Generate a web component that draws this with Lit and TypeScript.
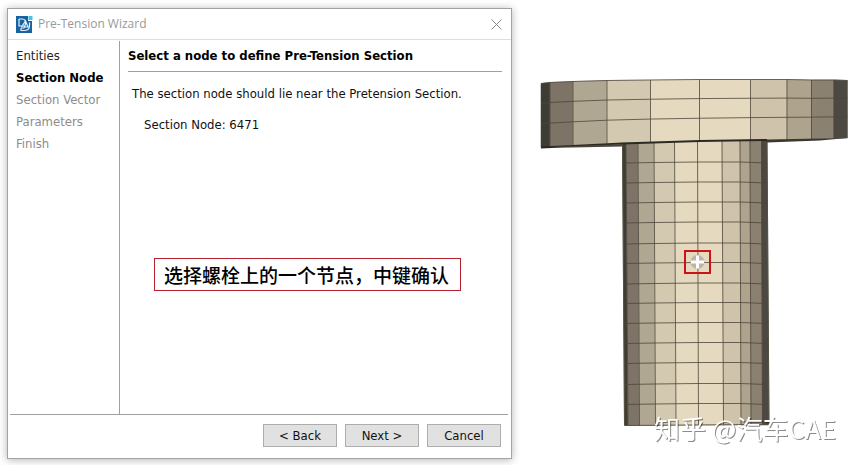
import { LitElement, html, css, svg } from "lit";
import { customElement, property, state } from "lit/decorators.js";

const HEAD_X = [541, 550, 573, 607, 650.5, 699.5, 750.5, 787, 811.5, 834, 847.5];
const HEAD_TOP = [83.5, 82.5, 81.5, 80.5, 80, 79.5, 79.5, 79.5, 80, 80, 80.5];
const HEAD_BOTTOM = [147.5, 147, 145.5, 143.5, 142, 141, 140, 139.5, 139, 138.5, 138];
const SHADES = ["#3e3d35", "#7d7467", "#b0a793", "#d3c9b1", "#e5dabf", "#e5dabf", "#cfc4ab", "#aea48e", "#8a8170", "#4c4942"];
const SHAFT_TOP = [622.5, 626, 638, 654, 674.5, 697.5, 722, 740, 750, 761.5, 767];
const SHAFT_BOTTOM = [624.5, 628, 639.5, 655.5, 676, 698.5, 723.5, 741, 751, 762.5, 769];
const SHAFT_ROWS = [162, 182, 202, 222, 243, 262.5, 283, 302.5, 322.5, 342.5, 362.5, 383.5, 403.5];

@customElement("bolt-model")
export class BoltModel extends LitElement {
  static styles = css`
    :host { display: block; }
    .view { display: block; width: 100%; height: auto; }
    .edge { fill: none; stroke: #4d463a; stroke-width: 1; stroke-opacity: 0.8; }
    .rim { fill: none; stroke: #2b2922; stroke-width: 2; }
    .outline { fill: none; stroke: #55503f; stroke-width: 1; }
    .pick { fill: none; stroke: #cb1318; stroke-width: 2; }
    .node { fill: #bdb5a6; }
    .cross { stroke: #fff; stroke-width: 3; }
    .mark {
      fill: #fff;
      font: 26px "Noto Sans CJK SC", sans-serif;
      filter: drop-shadow(1px 1px 0 rgba(0, 0, 0, 0.45));
    }
  `;

  private quad(xa: number, ya: number, xb: number, yb: number, xc: number, yc: number, xd: number, yd: number, fill: string) {
    return svg`<polygon points="${xa},${ya} ${xb},${yb} ${xc},${yc} ${xd},${yd}" fill=${fill} stroke=${fill} stroke-width="0.5"></polygon>`;
  }

  private headRow(t: number) {
    return HEAD_X.map((x, i) => `${x},${HEAD_TOP[i] + (HEAD_BOTTOM[i] - HEAD_TOP[i]) * t}`).join(" ");
  }

  render() {
    return html`
      <svg class="view" viewBox="512 0 347 465" role="img" aria-label="Bolt mesh with the picked node">
        ${SHADES.map((c, i) => this.quad(SHAFT_TOP[i], 140, SHAFT_TOP[i + 1], 140, SHAFT_BOTTOM[i + 1], 425, SHAFT_BOTTOM[i], 425, c))}
        ${SHAFT_TOP.slice(1, -1).map((x, i) => svg`<line class="edge" x1=${x} y1="140" x2=${SHAFT_BOTTOM[i + 1]} y2="425"></line>`)}
        ${SHAFT_ROWS.map((y) => svg`<polyline class="edge" points="625,${y + 1} 654,${y + 0.5} 698,${y} 740,${y} 767,${y + 1}"></polyline>`)}
        <polyline class="outline" points="622.5,143 624.5,425.5 769,424.5 767,142"></polyline>
        ${SHADES.map((c, i) => this.quad(HEAD_X[i], HEAD_TOP[i], HEAD_X[i + 1], HEAD_TOP[i + 1], HEAD_X[i + 1], HEAD_BOTTOM[i + 1], HEAD_X[i], HEAD_BOTTOM[i], c))}
        ${HEAD_X.slice(1, -1).map((x, i) => svg`<line class="edge" x1=${x} y1=${HEAD_TOP[i + 1]} x2=${x} y2=${HEAD_BOTTOM[i + 1]}></line>`)}
        ${[0, 0.31, 0.63].map((t) => svg`<polyline class="edge" points=${this.headRow(t)}></polyline>`)}
        <polyline class="rim" points="541,147.5 573,146 622,143.5 700,141 767,140"></polyline>
        <polygon fill="#4a463c" points="550,147 622,144 622,146.500 573,147.500"></polygon>
        <polygon fill="#3a372f" points="767,139.5 847,138 820,140.5 767,142.5"></polygon>
        <circle class="node" cx="697.5" cy="262" r="7"></circle>
        <path class="cross" d="M691 262H704M697.5 255.5V268.5"></path>
        <rect class="pick" x="685" y="251" width="25" height="22"></rect>
        <text class="mark" x="654" y="439">知乎 @汽车CAE</text>
      </svg>
    `;
  }
}

@customElement("wizard-dialog")
export class WizardDialog extends LitElement {
  @property({ type: Number }) node = 6471;
  @state() private current = 1;
  private steps = ["Entities", "Section Node", "Section Vector", "Parameters", "Finish"];

  static styles = css`
    :host {
      display: flex;
      flex-direction: column;
      box-sizing: border-box;
      border: 1px solid #a3a3a3;
      background: #fff;
      color: #111;
      box-shadow: 0 1px 8px rgba(0, 0, 0, 0.3);
      font: 13px/22px "DejaVu Sans Condensed", "DejaVu Sans", sans-serif;
      font-stretch: condensed;
    }
    .title { display: flex; align-items: center; gap: 5px; height: 30px; padding: 0 7px 0 8px; border-bottom: 1px solid #dedede; }
    .logo { width: 17px; height: 17px; }
    .name { flex: 1; margin: 0; color: #999; font: 12px/20px "Open Sans", sans-serif; }
    .close { display: flex; padding: 2px; border: 0; background: none; }
    .cross { width: 11px; height: 11px; stroke: #8b8b8b; fill: none; }
    .body { flex: 1; display: flex; margin: 0 3px 0 2px; border-bottom: 1px solid #a0a0a0; }
    .steps { width: 110px; box-sizing: border-box; margin: 1px 0 0; padding: 4px 0 0 6px; list-style: none; border-right: 1px solid #a0a0a0; color: #8c8c8c; white-space: nowrap; }
    .done { color: #222; }
    .active { color: #000; font-weight: bold; }
    .page { flex: 1; padding: 5px 6px 0 8px; }
    .heading { margin: 0 0 11px; padding-bottom: 4px; border-bottom: 1px solid #a0a0a0; color: #000; font-size: 13px; line-height: 22px; }
    .text { margin: 0; padding-left: 4px; }
    .value { margin: 9px 0 0; padding-left: 16px; }
    .note { width: fit-content; margin: 122px 0 0 26px; padding: 0 11px 0 9px; border: 1px solid #b4202c; color: #000; font: 500 19px/31px "Noto Sans CJK SC", sans-serif; }
    .actions { display: flex; justify-content: flex-end; gap: 8px; padding: 9px 10px 11px; }
    .button { width: 74px; height: 23px; padding: 0; border: 1px solid #adadad; background: #e1e1e1; color: #111; font: inherit; line-height: 20px; }
  `;

  private stepClass(i: number) {
    return i < this.current ? "done" : i === this.current ? "active" : "";
  }

  render() {
    return html`
      <header class="title">
        <svg class="logo" viewBox="0 0 17 17" aria-hidden="true">
          <path fill="#17629f" d="M0 0H12V5H16V17H0Z"></path>
          <path fill="#45c4ea" d="M12.500 0H16.500V4H12.500Z"></path>
          <path fill="none" stroke="#e4f3fb" stroke-width="1.200" d="M3 3V10H8M3 3H6C9 3 10 5 9.500 8L8 12H5M5.500 11L9.500 5L12 11H9M13.500 6.500V10C13.500 13 11 14.500 8 14.500H5V12"></path>
        </svg>
        <h1 class="name">Pre-Tension Wizard</h1>
        <button class="close" aria-label="Close">
          <svg class="cross" viewBox="0 0 11 11"><path d="M0.500 0.500L10.500 10.500M10.500 0.500L0.500 10.500"></path></svg>
        </button>
      </header>
      <div class="body">
        <ol class="steps">
          ${this.steps.map((s, i) => html`<li class=${this.stepClass(i)}>${s}</li>`)}
        </ol>
        <section class="page">
          <h2 class="heading">Select a node to define Pre-Tension Section</h2>
          <p class="text">The section node should lie near the Pretension Section.</p>
          <p class="value">Section Node: ${this.node}</p>
          <p class="note">选择螺栓上的一个节点，中键确认</p>
        </section>
      </div>
      <footer class="actions">
        <button class="button">&lt; Back</button>
        <button class="button">Next &gt;</button>
        <button class="button">Cancel</button>
      </footer>
    `;
  }
}

@customElement("app-root")
export class AppRoot extends LitElement {
  static styles = css`
    :host {
      display: grid;
      grid-template-columns: 512fr 347fr;
      min-height: 100vh;
      background: #fff;
    }
    .dialog { margin: 8px 0 6px 7px; }
  `;

  render() {
    return html`
      <wizard-dialog class="dialog"></wizard-dialog>
      <bolt-model></bolt-model>
    `;
  }
}
